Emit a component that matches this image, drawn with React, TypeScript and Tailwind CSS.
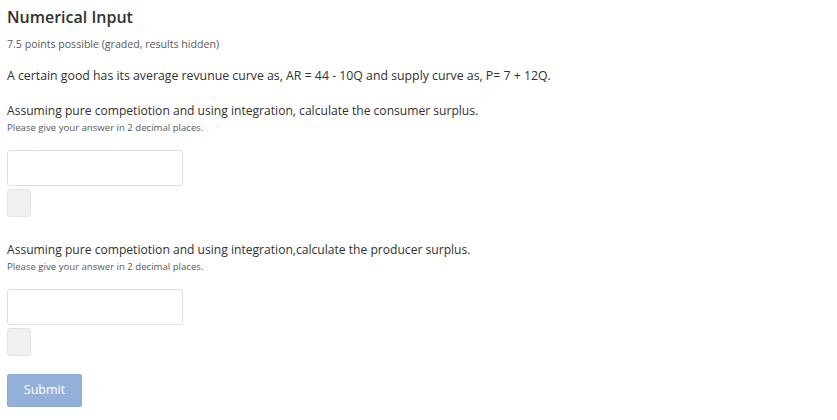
export default function App() {
  return (
    <div className="w-[837px] h-[420px] bg-white px-[7px] pt-[6px] text-[#313131] overflow-hidden" style={{ fontFamily: '"Open Sans", sans-serif' }}>
      <h2 className="text-[16px] font-semibold leading-[22px] text-[#313131]">Numerical Input</h2>
      <div className="mt-[9px] text-[10.6px] leading-[14px] text-[#5a5a5a]">7.5 points possible (graded, results hidden)</div>

      <p className="mt-[16px] text-[12.3px] leading-[18px]">
        A certain good has its average revunue curve as, AR = 44 - 10Q and supply curve as, P= 7 + 12Q.
      </p>

      <div className="mt-[17px]">
        <p className="text-[12.1px] leading-[18px]">Assuming pure competiotion and using integration, calculate the consumer surplus.</p>
        <p className="mt-[1px] text-[9.6px] leading-[14px] text-[#5a5a5a]">Please give your answer in 2 decimal places.</p>
        <input type="text" className="mt-[15px] block w-[176px] h-[36px] border border-[#e0e0e0] rounded-[3px] bg-white outline-none" />
        <div className="mt-[3px] w-[24px] h-[28px] rounded-[3px] border border-[#e4e4e4] bg-[#f0f0f0]" />
      </div>

      <div className="mt-[24px]">
        <p className="text-[12.1px] leading-[18px]">Assuming pure competiotion and using integration,calculate the producer surplus.</p>
        <p className="mt-[1px] text-[9.6px] leading-[14px] text-[#5a5a5a]">Please give your answer in 2 decimal places.</p>
        <input type="text" className="mt-[15px] block w-[176px] h-[36px] border border-[#e0e0e0] rounded-[3px] bg-white outline-none" />
        <div className="mt-[3px] w-[24px] h-[28px] rounded-[3px] border border-[#e4e4e4] bg-[#f0f0f0]" />
      </div>

      <button className="mt-[18px] block w-[75px] h-[33px] bg-[#95b0d8] text-white text-[12.5px] rounded-[2px] border border-[#8eaad4]">Submit</button>
    </div>
  );
}
